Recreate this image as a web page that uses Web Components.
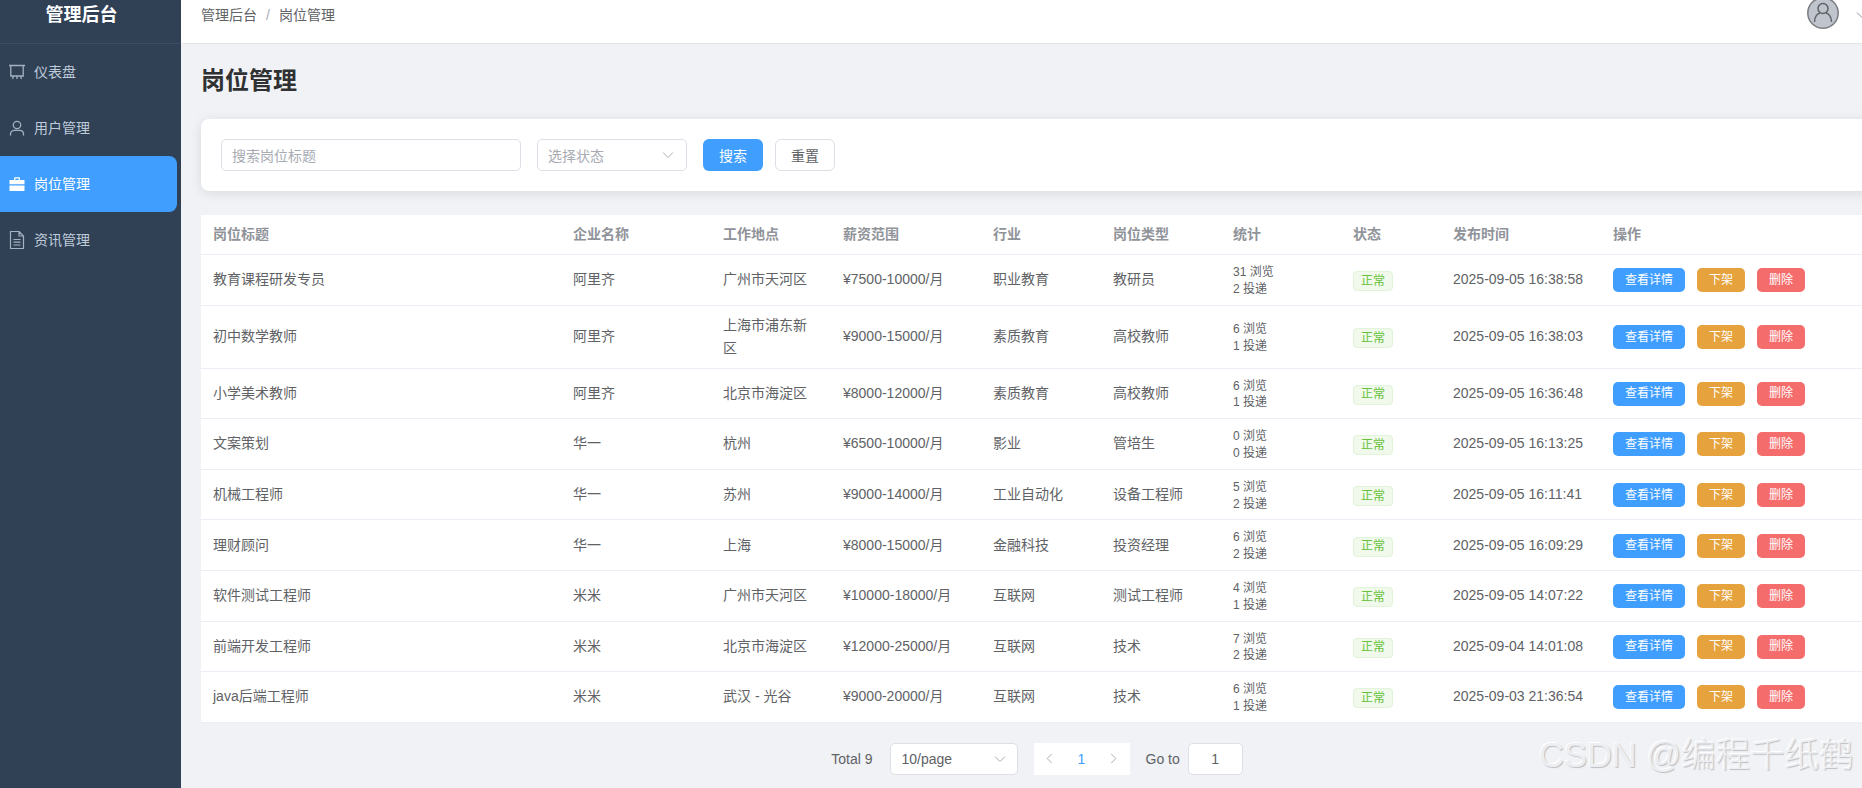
<!DOCTYPE html>
<html lang="zh-CN">
<head>
<meta charset="utf-8">
<title>岗位管理</title>
<style>
  html, body { margin: 0; padding: 0; height: 100%; overflow: hidden; background: #f0f2f5; }
  body { font-family: "Liberation Sans", "Noto Sans CJK SC", sans-serif; font-size: 14px; color: #606266; }
</style>
</head>
<body>
<app-shell>
  <side-bar slot="side"></side-bar>
  <top-bar slot="top"></top-bar>
  <page-title>岗位管理</page-title>
  <filter-card></filter-card>
  <job-table></job-table>
  <pager-bar></pager-bar>
</app-shell>
<water-mark>CSDN @编程千纸鹤</water-mark>

<script>
  const ICONS = {
    board: '<path d="M1 2.500h16M2.800 2.500v10.500h12.400V2.500M5.500 13l-1 3M12.500 13l1 3M9 13v3" fill="none" stroke="currentColor" stroke-width="1.300"/>',
    user: '<circle cx="9" cy="6" r="3.700" fill="none" stroke="currentColor" stroke-width="1.300"/><path d="M2.500 16.500v-1.500c0-2.500 2-3.700 4-3.700h5c2 0 4 1.200 4 3.700v1.500" fill="none" stroke="currentColor" stroke-width="1.300"/>',
    case: '<path d="M6 5V3.200c0-.6.4-1 1-1h4c.6 0 1 .4 1 1V5h4.500v4.300h-15V5zm1.300 0h3.400V3.400H7.300zM1.500 10.500h15V16h-15z" fill="currentColor" fill-rule="evenodd"/>',
    file: '<path d="M2.500 .500h8.500l4.500 4.500v12.500h-13zM11 .500V5h4.500M5.500 8.500h7M5.500 11.200h7M5.500 14h7" fill="none" stroke="currentColor" stroke-width="1.200"/>'
  };
  const chevron = (size, color) => `<svg width="${size}" height="${size}" viewBox="0 0 14 14" fill="none" stroke="${color}" stroke-width="1"><path d="M2 4.500l5 5 5-5"/></svg>`;

  class AppShell extends HTMLElement {
    constructor() {
      super();
      this.attachShadow({mode: 'open'}).innerHTML = `
        <style>
          :host { display: flex; width: 1893px; min-height: 830px; margin-top: -16px; }
          .side { flex: 0 0 181px; }
          .body { flex: 1; min-width: 0; display: flex; flex-direction: column; }
          main { padding: 20px; display: flex; flex-direction: column; }
        </style>
        <div class="side"><slot name="side"></slot></div>
        <div class="body">
          <slot name="top"></slot>
          <main><slot></slot></main>
        </div>`;
    }
  }

  class SideBar extends HTMLElement {
    constructor() {
      super();
      const items = [['board', '仪表盘'], ['user', '用户管理'], ['case', '岗位管理', true], ['file', '资讯管理']];
      this.attachShadow({mode: 'open'}).innerHTML = `
        <style>
          :host { display: block; height: 100%; background: #304156; }
          .logo { height: 60px; box-sizing: border-box; border-bottom: 1px solid #3d4e64; display: flex;
            align-items: center; justify-content: center; color: #fff; font-size: 18px; font-weight: 700; padding: 0 18px 1px 0; }
          nav { padding-right: 4px; }
        </style>
        <div class="logo">管理后台</div>
        <nav>${items.map(i => `<side-item icon="${i[0]}" ${i[2] ? 'active' : ''}>${i[1]}</side-item>`).join('')}</nav>`;
    }
  }

  class SideItem extends HTMLElement {
    constructor() {
      super();
      this.attachShadow({mode: 'open'}).innerHTML = `
        <style>
          :host { display: flex; align-items: center; height: 56px; padding-left: 8px; gap: 8px; color: #bfcbd9; font-size: 14px; border-radius: 0 8px 8px 0; }
          :host([active]) { background: #409eff; color: #fff; }
          svg { color: #a3b1c1; flex: none; }
          :host([active]) svg { color: #fff; }
          span { margin-bottom: 2px; }
        </style>
        <svg width="18" height="18" viewBox="0 0 18 18">${ICONS[this.getAttribute('icon')]}</svg>
        <span><slot></slot></span>`;
    }
  }

  class TopBar extends HTMLElement {
    constructor() {
      super();
      this.attachShadow({mode: 'open'}).innerHTML = `
        <style>
          :host { flex: none; display: flex; align-items: center; justify-content: space-between; height: 60px; box-sizing: border-box;
            background: #fff; border-bottom: 1px solid #e6e6e6; padding: 0 20px; font-size: 14px; color: #606266; }
          .sep { color: #a8abb2; margin: 0 9px; }
          .user { display: flex; align-items: center; gap: 16px; margin-right: 4px; }
          .user svg:first-child { margin-top: -1px; }
          .user svg:last-child { margin-top: 2px; }
        </style>
        <div><span>管理后台</span><span class="sep">/</span><span>岗位管理</span></div>
        <div class="user">
          <svg width="32" height="32" viewBox="0 0 32 32">
            <circle cx="16" cy="16" r="15.200" fill="#c0c4cc" stroke="#7d8085" stroke-width="1.600"/>
            <circle cx="16" cy="11.500" r="5" fill="none" stroke="#5f6266" stroke-width="1.500"/>
            <path d="M7.500 25c0-5.500 3-8.500 5.500-9M24.500 25c0-5.500-3-8.500-5.500-9" fill="none" stroke="#5f6266" stroke-width="1.500"/>
          </svg>
          ${chevron(14, '#8f9399')}
        </div>`;
    }
  }

  class PageTitle extends HTMLElement {
    constructor() {
      super();
      this.attachShadow({mode: 'open'}).innerHTML = `
        <style>:host { display: block; font-size: 24px; font-weight: 700; line-height: 34px; color: #303133; margin-bottom: 21px; }</style>
        <slot></slot>`;
    }
  }

  class UiBtn extends HTMLElement {
    constructor() {
      super();
      this.attachShadow({mode: 'open'}).innerHTML = `
        <style>
          :host { display: inline-flex; align-items: center; justify-content: center; box-sizing: border-box; height: 32px; width: 60px;
            border-radius: 6px; font-size: 14px; background: #fff; color: #606266; border: 1px solid #dcdfe6; }
          :host([type]) { border-color: transparent; color: #fff; }
          :host([type=primary]) { background: #409eff; }
          :host([type=warning]) { background: #e6a23c; }
          :host([type=danger]) { background: #f56c6c; }
          :host([small]) { height: 24px; width: 48px; font-size: 12px; border-radius: 5px; }
          :host([wide]) { width: 72px; }
        </style>
        <slot></slot>`;
    }
  }

  class FilterCard extends HTMLElement {
    constructor() {
      super();
      this.attachShadow({mode: 'open'}).innerHTML = `
        <style>
          :host { display: flex; align-items: center; height: 72px; box-sizing: border-box; padding: 20px; background: #fff;
            border-radius: 8px; box-shadow: 0 2px 12px rgba(0, 0, 0, .1); margin-bottom: 24px; }
          .field { box-sizing: border-box; height: 32px; border: 1px solid #dcdfe6; border-radius: 5px; padding: 0 10px 1px;
            display: flex; align-items: center; color: #a8abb2; font-size: 14px; background: #fff; }
          .kw { width: 300px; margin-right: 16px; }
          .st { width: 150px; justify-content: space-between; margin-right: 16px; padding-right: 11px; }
          ui-btn + ui-btn { margin-left: 12px; }
        </style>
        <div class="field kw">搜索岗位标题</div>
        <div class="field st"><span>选择状态</span>${chevron(14, '#a8abb2')}</div>
        <ui-btn type="primary">搜索</ui-btn>
        <ui-btn>重置</ui-btn>`;
    }
  }

  const COLUMNS = '360px 150px 120px 150px 120px 120px 120px 100px 160px 1fr';

  class JobRow extends HTMLElement {
    constructor() {
      super();
      const a = n => this.getAttribute(n);
      this.attachShadow({mode: 'open'}).innerHTML = `
        <style>
          :host { display: grid; grid-template-columns: ${COLUMNS}; box-sizing: border-box;
            border-bottom: 1px solid #ebeef5; font-size: 14px; line-height: 23px; color: #606266; }
          .c { padding: 8px 12px; display: flex; align-items: center; min-width: 0; }
          .stat { font-size: 12px; line-height: 16.800px; margin: 1px 0 -1px; }
          .tag { box-sizing: border-box; width: 40px; height: 20px; background: #f0f9eb; border: 1px solid #e1f3d8; border-radius: 4px;
            color: #67c23a; font-size: 12px; display: flex; align-items: center; justify-content: center; margin-top: 3px; }
          .ops { gap: 12px; white-space: nowrap; padding-top: 9px; }
        </style>
        <div class="c">${a('title')}</div>
        <div class="c">${a('company')}</div>
        <div class="c">${a('place')}</div>
        <div class="c">${a('pay')}</div>
        <div class="c">${a('trade')}</div>
        <div class="c">${a('kind')}</div>
        <div class="c"><div class="stat">${a('views')} 浏览<br>${a('sends')} 投递</div></div>
        <div class="c"><div class="tag">正常</div></div>
        <div class="c">${a('time')}</div>
        <div class="c ops">
          <ui-btn small wide type="primary">查看详情</ui-btn>
          <ui-btn small type="warning">下架</ui-btn>
          <ui-btn small type="danger">删除</ui-btn>
        </div>`;
    }
  }

  class JobTable extends HTMLElement {
    constructor() {
      super();
      const heads = ['岗位标题', '企业名称', '工作地点', '薪资范围', '行业', '岗位类型', '统计', '状态', '发布时间', '操作'];
      const rows = [
        ['教育课程研发专员', '阿里齐', '广州市天河区', '¥7500-10000/月', '职业教育', '教研员', 31, 2, '2025-09-05 16:38:58'],
        ['初中数学教师', '阿里齐', '上海市浦东新区', '¥9000-15000/月', '素质教育', '高校教师', 6, 1, '2025-09-05 16:38:03'],
        ['小学美术教师', '阿里齐', '北京市海淀区', '¥8000-12000/月', '素质教育', '高校教师', 6, 1, '2025-09-05 16:36:48'],
        ['文案策划', '华一', '杭州', '¥6500-10000/月', '影业', '管培生', 0, 0, '2025-09-05 16:13:25'],
        ['机械工程师', '华一', '苏州', '¥9000-14000/月', '工业自动化', '设备工程师', 5, 2, '2025-09-05 16:11:41'],
        ['理财顾问', '华一', '上海', '¥8000-15000/月', '金融科技', '投资经理', 6, 2, '2025-09-05 16:09:29'],
        ['软件测试工程师', '米米', '广州市天河区', '¥10000-18000/月', '互联网', '测试工程师', 4, 1, '2025-09-05 14:07:22'],
        ['前端开发工程师', '米米', '北京市海淀区', '¥12000-25000/月', '互联网', '技术', 7, 2, '2025-09-04 14:01:08'],
        ['java后端工程师', '米米', '武汉 - 光谷', '¥9000-20000/月', '互联网', '技术', 6, 1, '2025-09-03 21:36:54']
      ];
      this.attachShadow({mode: 'open'}).innerHTML = `
        <style>
          :host { display: block; background: #fff; margin-bottom: 20px; }
          .head { display: grid; grid-template-columns: ${COLUMNS}; height: 40px; box-sizing: border-box; border-bottom: 1px solid #ebeef5;
            align-items: center; font-size: 14px; font-weight: 700; color: #909399; padding-bottom: 3px; }
          .head div { padding: 0 12px; }
        </style>
        <div class="head">${heads.map(h => `<div>${h}</div>`).join('')}</div>
        ${rows.map(r => `<job-row title="${r[0]}" company="${r[1]}" place="${r[2]}" pay="${r[3]}" trade="${r[4]}" kind="${r[5]}" views="${r[6]}" sends="${r[7]}" time="${r[8]}"></job-row>`).join('')}`;
    }
  }

  class PagerBar extends HTMLElement {
    constructor() {
      super();
      this.attachShadow({mode: 'open'}).innerHTML = `
        <style>
          :host { display: flex; justify-content: center; align-items: center; height: 32px; font-size: 14px; color: #606266; }
          .box { box-sizing: border-box; height: 32px; background: #fff; border: 1px solid #dcdfe6; border-radius: 5px; display: flex; align-items: center; }
          .size { width: 128px; margin: 0 16px 0 17px; padding: 0 10px 0 11px; justify-content: space-between; }
          .pages { display: flex; margin-right: 16px; }
          .pages div { width: 32px; height: 32px; background: #fff; display: flex; align-items: center; justify-content: center; }
          .on { color: #409eff; }
          .go { width: 55px; margin-left: 8px; justify-content: center; }
          .prev svg { transform: rotate(90deg); }
          .next svg { transform: rotate(-90deg); }
        </style>
        <span>Total 9</span>
        <div class="box size"><span>10/page</span>${chevron(14, '#a8abb2')}</div>
        <div class="pages">
          <div class="prev">${chevron(13, '#a8abb2')}</div>
          <div class="on">1</div>
          <div class="next">${chevron(13, '#a8abb2')}</div>
        </div>
        <span>Go to</span>
        <div class="box go">1</div>`;
    }
  }

  class WaterMark extends HTMLElement {
    constructor() {
      super();
      this.attachShadow({mode: 'open'}).innerHTML = `
        <style>
          :host { position: absolute; left: 1539px; top: 733px; font-family: "Liberation Sans", "Noto Sans CJK SC", sans-serif; font-size: 34.500px; line-height: 44px;
            white-space: nowrap; color: #eceef1; font-weight: 300; text-shadow: 1px 1px 1px #bcbec2, -1px -1px 0 #fff; }
        </style>
        <slot></slot>`;
    }
  }

  customElements.define('ui-btn', UiBtn);
  customElements.define('side-item', SideItem);
  customElements.define('side-bar', SideBar);
  customElements.define('top-bar', TopBar);
  customElements.define('page-title', PageTitle);
  customElements.define('filter-card', FilterCard);
  customElements.define('job-row', JobRow);
  customElements.define('job-table', JobTable);
  customElements.define('pager-bar', PagerBar);
  customElements.define('water-mark', WaterMark);
  customElements.define('app-shell', AppShell);
</script>
</body>
</html>
